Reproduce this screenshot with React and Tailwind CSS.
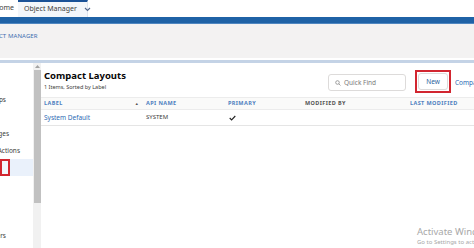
import React from "react";

const font = { fontFamily: '"Noto Sans", "Open Sans", Arial, sans-serif' };

function SideItem({ text, pr }) {
  return (
    <div className="h-[17px] flex items-center justify-end whitespace-nowrap text-[6.5px] text-[#3e3e3c]" style={{ paddingRight: pr }}>
      <span className="shrink-0">{text}</span>
    </div>
  );
}

export default function App() {
  return (
    <div className="w-[474px] h-[248px] overflow-hidden bg-white relative flex flex-col" style={font}>
      {/* top nav */}
      <div className="h-[17px] flex items-stretch bg-white shrink-0">
        <div className="w-[18px] shrink-0 flex items-center justify-end overflow-hidden whitespace-nowrap text-[7px] text-[#3e3e3c] pr-[4px]">
          <span className="shrink-0">Home</span>
        </div>
        <div className="w-[70px] shrink-0 whitespace-nowrap bg-[#f3f6fa] border-t-2 border-[#1b5297] border-r border-r-[#dfe5ee] flex items-center pl-[6px] text-[7px] text-[#3e3e3c]">
          <span>Object Manager</span>
          <svg className="ml-[7px] shrink-0" width="7" height="5" viewBox="0 0 7 5"><path d="M1 1 L3.5 3.5 L6 1" stroke="#54698d" strokeWidth="1.1" fill="none" /></svg>
        </div>
      </div>
      {/* blue band */}
      <div className="h-[7px] bg-[#1f62a6] shrink-0 border-b border-[#4f86c0]" />
      {/* gray header */}
      <div className="h-[34px] bg-[#f3f2f2] shrink-0 pt-[8px] text-[6px] text-[#3f70b0] tracking-[0.1px] whitespace-nowrap overflow-hidden">
        <div className="ml-[-15px]">OBJECT MANAGER</div>
      </div>
      <div className="h-[2px] bg-white shrink-0" />
      <div className="h-[3px] bg-[#c4d3e6] shrink-0" />
      {/* body */}
      <div className="flex-1 flex min-h-0">
        {/* sidebar */}
        <div className="w-[33px] shrink-0 overflow-hidden pt-[11px] bg-white">
          <SideItem text="Details" pr="40px" />
          <SideItem text="Fields & Relationships" pr="27px" />
          <SideItem text="Page Layouts" pr="40px" />
          <SideItem text="Lightning Record Pages" pr="24px" />
          <SideItem text="Buttons, Links, and Actions" pr="13px" />
          <div className="h-[17px] bg-[#eaf1fb] flex">
            <div className="w-[10px] h-[17px] border-2 border-[#d22630] bg-white/40" />
          </div>
          <SideItem text="Field Sets" pr="40px" />
          <SideItem text="Object Limits" pr="40px" />
          <SideItem text="Record Types" pr="40px" />
          <SideItem text="Triggers" pr="27px" />
        </div>
        {/* scrollbar */}
        <div className="w-[8px] shrink-0 bg-[#f1f1f1] flex flex-col items-center">
          <div className="h-[7px] flex items-center justify-center">
            <svg width="5" height="3" viewBox="0 0 5 3"><path d="M0 3 L2.5 0 L5 3 Z" fill="#a3a3a3" /></svg>
          </div>
          <div className="w-[7px] h-[133px] bg-[#c1c1c1]" />
        </div>
        {/* main */}
        <div className="flex-1 min-w-0 overflow-hidden flex flex-col bg-white">
          <div className="h-[34px] shrink-0 flex items-start">
            <div className="pl-[3px] pt-[7px] w-[287px] shrink-0">
              <div className="text-[9.5px] font-bold text-[#080707] leading-[12px] whitespace-nowrap">Compact Layouts</div>
              <div className="text-[5.5px] text-[#3e3e3c] leading-[8px] mt-[1px] whitespace-nowrap">1 Items, Sorted by Label</div>
            </div>
            <div className="mt-[11px] w-[78px] h-[17px] shrink-0 border border-[#dddbda] rounded-[3px] flex items-center pl-[6px] text-[6.5px] text-[#7a7a7a] whitespace-nowrap">
              <svg width="6" height="6" viewBox="0 0 6 6" className="mr-[3px]"><circle cx="2.5" cy="2.5" r="1.8" stroke="#8a8a8a" strokeWidth="0.8" fill="none" /><path d="M3.8 3.8 L5.5 5.5" stroke="#8a8a8a" strokeWidth="0.8" /></svg>
              <span>Quick Find</span>
            </div>
            <div className="ml-[9px] mt-[7px] w-[36px] h-[23px] shrink-0 border-2 border-[#d22630] flex items-center justify-center">
              <div className="w-[30px] h-[17px] border border-[#dddbda] rounded-[3px] bg-white flex items-center justify-center text-[6.5px] text-[#2a5f9e]">New</div>
            </div>
            <div className="ml-[4px] mt-[15px] text-[6.5px] text-[#2a6ab5] whitespace-nowrap">Compact Layout Assignment</div>
          </div>
          {/* table header */}
          <div className="h-[13px] shrink-0 bg-[#fafaf9] border-y border-[#ececec] flex items-center text-[5.5px] font-bold tracking-[0.4px] text-[#4f81c0] whitespace-nowrap">
            <div className="w-[105px] shrink-0 pl-[3px] flex items-center justify-between pr-[7px]"><span>LABEL</span><span className="text-[4px] text-[#555]">▲</span></div>
            <div className="w-[82px] shrink-0">API NAME</div>
            <div className="w-[77px] shrink-0">PRIMARY</div>
            <div className="w-[105px] shrink-0 text-[#555]">MODIFIED BY</div>
            <div className="shrink-0">LAST MODIFIED</div>
          </div>
          {/* row */}
          <div className="h-[16px] shrink-0 border-b border-[#e5e5e5] flex items-center text-[6.5px] whitespace-nowrap">
            <div className="w-[105px] shrink-0 pl-[3px] text-[#2f6cb5]">System Default</div>
            <div className="w-[82px] shrink-0 text-[#3e3e3c] text-[6px]">SYSTEM</div>
            <div className="w-[77px] shrink-0 pl-[1px]">
              <svg width="7" height="6" viewBox="0 0 7 6"><path d="M0.7 3 L2.6 4.9 L6.3 1" stroke="#222" strokeWidth="1.1" fill="none" /></svg>
            </div>
            <div className="w-[105px] shrink-0" />
          </div>
        </div>
      </div>
      {/* watermark */}
      <div className="absolute left-[417px] top-[226px] whitespace-nowrap text-[#a8a8a8] pointer-events-none">
        <div className="text-[9.5px] leading-[12px]">Activate Windows</div>
        <div className="text-[6px] leading-[9px]">Go to Settings to activate Windows.</div>
      </div>
    </div>
  );
}
